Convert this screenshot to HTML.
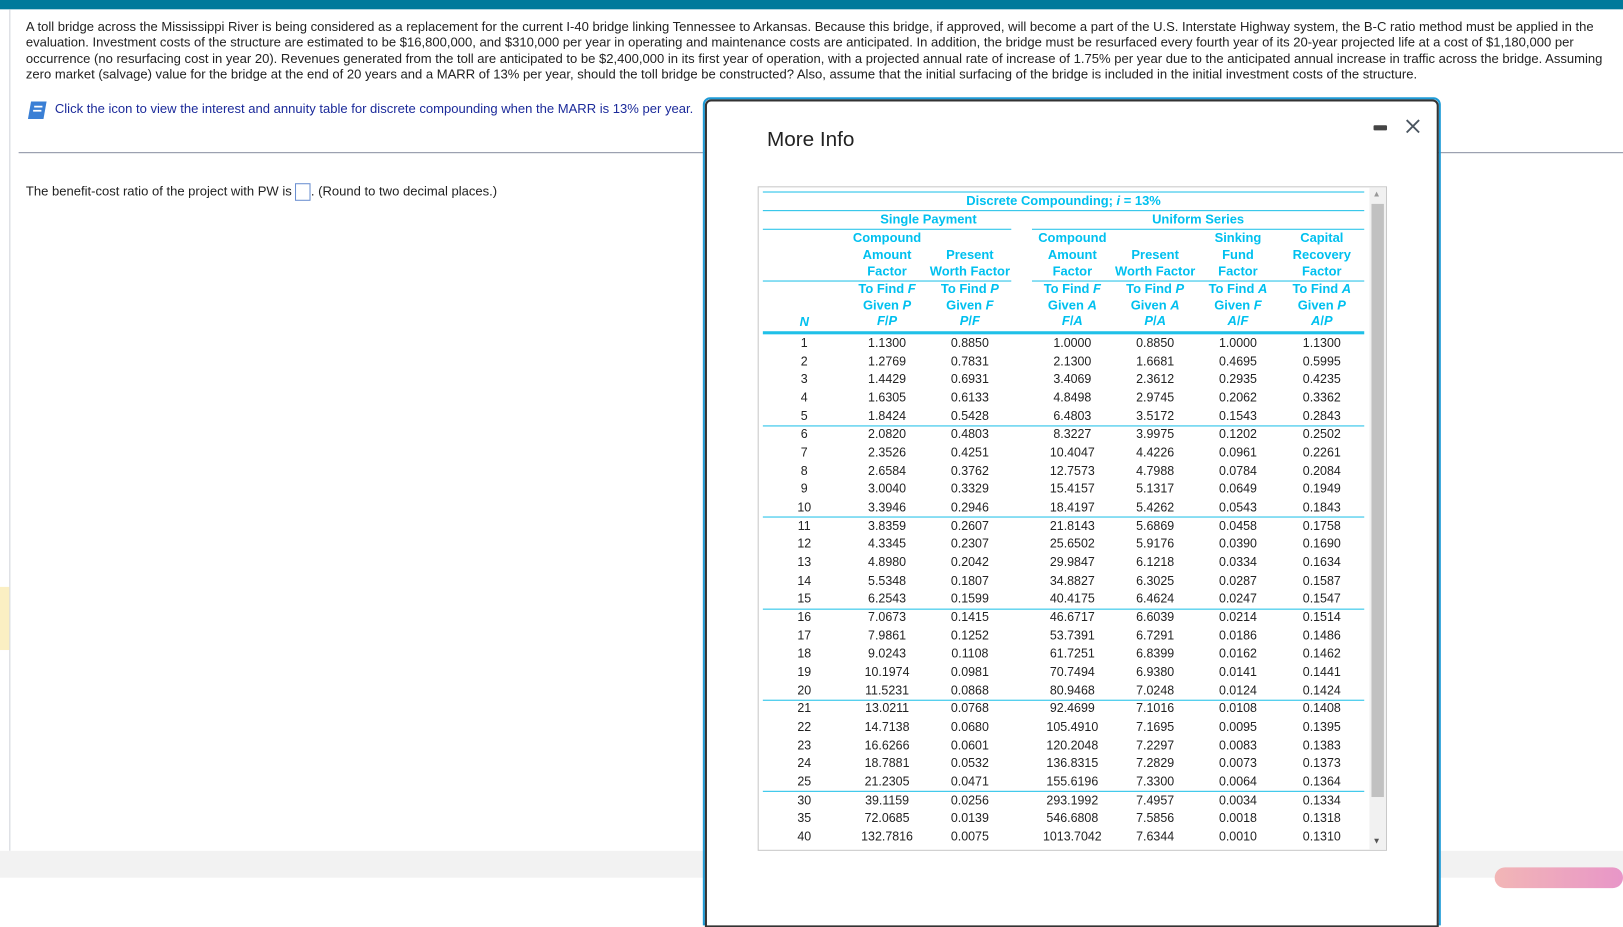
<!DOCTYPE html>
<html><head><meta charset="utf-8"><style>
html,body{margin:0;padding:0;width:1623px;height:878px;overflow:hidden;background:#fff}
#w{position:absolute;left:0;top:0;width:1568px;height:848px;transform:scale(1.03508);transform-origin:0 0;font-family:"Liberation Sans",Arial,sans-serif;color:#222}
.a{position:absolute}
.p{left:25px;top:19px;width:1532px;font-size:12.6px;line-height:15.3px;color:#222}
.t{position:absolute;font-size:12px;line-height:16px;text-align:center;width:90px}
.h{color:#00c0ef;font-weight:bold;font-size:12.5px}
.i{font-style:italic}
.l{position:absolute;height:1px;background:#1fc0e8}
</style></head><body><div id="w">
<div class="a" style="left:0;top:0;width:1568px;height:9px;background:#017a9b"></div>
<div class="a" style="left:9px;top:9px;width:1px;height:813px;background:#d0d3da"></div>
<div class="a" style="left:0;top:567px;width:9px;height:61px;background:#fbefc3"></div>
<div class="a" style="left:0;top:822px;width:1568px;height:26px;background:#f2f2f2"></div>
<div class="a p">A toll bridge across the Mississippi River is being considered as a replacement for the current I-40 bridge linking Tennessee to Arkansas. Because this bridge, if approved, will become a part of the U.S. Interstate Highway system, the B-C ratio method must be applied in the evaluation. Investment costs of the structure are estimated to be $16,800,000, and $310,000 per year in operating and maintenance costs are anticipated. In addition, the bridge must be resurfaced every fourth year of its 20-year projected life at a cost of $1,180,000 per occurrence (no resurfacing cost in year 20). Revenues generated from the toll are anticipated to be $2,400,000 in its first year of operation, with a projected annual rate of increase of 1.75% per year due to the anticipated annual increase in traffic across the bridge. Assuming zero market (salvage) value for the bridge at the end of 20 years and a MARR of 13% per year, should the toll bridge be constructed? Also, assume that the initial surfacing of the bridge is included in the initial investment costs of the structure.</div>
<svg class="a" style="left:26px;top:97px" width="21" height="19" viewBox="0 0 21 19"><path d="M4 1h15l-3 17H1z" fill="#3a7fd5"/><path d="M7 6h8M6 10h8" stroke="#fff" stroke-width="1.6"/></svg>
<div class="a" style="left:53px;top:97px;font-size:12.6px;line-height:16px;color:#1b2a9a">Click the icon to view the interest and annuity table for discrete compounding when the MARR is 13% per year.</div>
<div class="a" style="left:18px;top:147px;width:1550px;height:1px;background:#8a90a2"></div>
<div class="a" style="left:25px;top:177px;font-size:12.6px;line-height:16px">The benefit-cost ratio of the project with PW is <span style="display:inline-block;width:15px;height:17px;border:1px solid #6a8ed0;vertical-align:middle;box-sizing:border-box"></span>. (Round to two decimal places.)</div>
<div class="a" style="left:1444px;top:838px;width:124px;height:20px;border-radius:12px;background:linear-gradient(90deg,#f2b6b6,#e896c8)"></div>

<div class="a" style="left:679px;top:94px;width:713px;height:800px;border:2px solid #1e9bd7;border-radius:7px 7px 0 0;box-sizing:border-box"></div>
<div class="a" style="left:681px;top:96px;width:709px;height:800px;border:2px solid #333;border-radius:6px 6px 0 0;box-sizing:border-box;background:#fff"></div>
<div class="a" style="left:741px;top:124px;font-size:20px;color:#222">More Info</div>
<div class="a" style="left:1327px;top:121px;width:13px;height:5px;background:#444;border-radius:1px"></div>
<svg class="a" style="left:1357px;top:114px" width="16" height="16"><path d="M2 2L14 14M14 2L2 14" stroke="#4a5560" stroke-width="1.8"/></svg>

<div class="a" style="left:732px;top:180px;width:608px;height:642px;border:1px solid #c8c8c8;box-sizing:border-box"></div>
<div class="a" style="left:1323px;top:181px;width:16px;height:640px;background:#f1f1f1"></div>
<div class="a" style="left:1325px;top:197px;width:12px;height:573px;background:#c1c1c1"></div>
<div class="a" style="left:1326px;top:183px;font-size:8px;color:#999">▲</div>
<div class="a" style="left:1326px;top:808px;font-size:8px;color:#555">▼</div>

<div class="l" style="left:737px;top:185px;width:581px"></div>
<div class="l" style="left:737px;top:203px;width:581px"></div>
<div class="l" style="left:737px;top:221px;width:240px"></div>
<div class="l" style="left:997px;top:221px;width:321px"></div>
<div class="l" style="left:737px;top:271px;width:240px"></div>
<div class="l" style="left:997px;top:271px;width:321px"></div>
<div class="l" style="left:737px;top:320px;width:581px;height:3px"></div>
<div class="a h" style="left:737px;top:186px;width:581px;text-align:center;line-height:16px">Discrete Compounding; <span class="i">i</span> = 13%</div>
<div class="a h" style="left:737px;top:204px;width:320px;text-align:center;line-height:16px">Single Payment</div>
<div class="a h" style="left:997px;top:204px;width:321px;text-align:center;line-height:16px">Uniform Series</div>
<div class="t h" style="left:812px;top:222px;line-height:16px">Compound<br>Amount<br>Factor</div>
<div class="t h" style="left:892px;top:238px;line-height:16px">Present<br>Worth Factor</div>
<div class="t h" style="left:991px;top:222px;line-height:16px">Compound<br>Amount<br>Factor</div>
<div class="t h" style="left:1071px;top:238px;line-height:16px">Present<br>Worth Factor</div>
<div class="t h" style="left:1151px;top:222px;line-height:16px">Sinking<br>Fund<br>Factor</div>
<div class="t h" style="left:1232px;top:222px;line-height:16px">Capital<br>Recovery<br>Factor</div>
<div class="t h i" style="left:732px;top:303px">N</div>
<div class="t h" style="left:812px;top:272px;line-height:15.5px">To Find <i>F</i><br>Given <i>P</i><br><i>F</i>/<i>P</i></div>
<div class="t h" style="left:892px;top:272px;line-height:15.5px">To Find <i>P</i><br>Given <i>F</i><br><i>P</i>/<i>F</i></div>
<div class="t h" style="left:991px;top:272px;line-height:15.5px">To Find <i>F</i><br>Given <i>A</i><br><i>F</i>/<i>A</i></div>
<div class="t h" style="left:1071px;top:272px;line-height:15.5px">To Find <i>P</i><br>Given <i>A</i><br><i>P</i>/<i>A</i></div>
<div class="t h" style="left:1151px;top:272px;line-height:15.5px">To Find <i>A</i><br>Given <i>F</i><br><i>A</i>/<i>F</i></div>
<div class="t h" style="left:1232px;top:272px;line-height:15.5px">To Find <i>A</i><br>Given <i>P</i><br><i>A</i>/<i>P</i></div>
<div id="rows"></div>
</div>
<script>
var d=[["1","1.1300","0.8850","1.0000","0.8850","1.0000","1.1300"],["2","1.2769","0.7831","2.1300","1.6681","0.4695","0.5995"],["3","1.4429","0.6931","3.4069","2.3612","0.2935","0.4235"],["4","1.6305","0.6133","4.8498","2.9745","0.2062","0.3362"],["5","1.8424","0.5428","6.4803","3.5172","0.1543","0.2843"],["6","2.0820","0.4803","8.3227","3.9975","0.1202","0.2502"],["7","2.3526","0.4251","10.4047","4.4226","0.0961","0.2261"],["8","2.6584","0.3762","12.7573","4.7988","0.0784","0.2084"],["9","3.0040","0.3329","15.4157","5.1317","0.0649","0.1949"],["10","3.3946","0.2946","18.4197","5.4262","0.0543","0.1843"],["11","3.8359","0.2607","21.8143","5.6869","0.0458","0.1758"],["12","4.3345","0.2307","25.6502","5.9176","0.0390","0.1690"],["13","4.8980","0.2042","29.9847","6.1218","0.0334","0.1634"],["14","5.5348","0.1807","34.8827","6.3025","0.0287","0.1587"],["15","6.2543","0.1599","40.4175","6.4624","0.0247","0.1547"],["16","7.0673","0.1415","46.6717","6.6039","0.0214","0.1514"],["17","7.9861","0.1252","53.7391","6.7291","0.0186","0.1486"],["18","9.0243","0.1108","61.7251","6.8399","0.0162","0.1462"],["19","10.1974","0.0981","70.7494","6.9380","0.0141","0.1441"],["20","11.5231","0.0868","80.9468","7.0248","0.0124","0.1424"],["21","13.0211","0.0768","92.4699","7.1016","0.0108","0.1408"],["22","14.7138","0.0680","105.4910","7.1695","0.0095","0.1395"],["23","16.6266","0.0601","120.2048","7.2297","0.0083","0.1383"],["24","18.7881","0.0532","136.8315","7.2829","0.0073","0.1373"],["25","21.2305","0.0471","155.6196","7.3300","0.0064","0.1364"],["30","39.1159","0.0256","293.1992","7.4957","0.0034","0.1334"],["35","72.0685","0.0139","546.6808","7.5856","0.0018","0.1318"],["40","132.7816","0.0075","1013.7042","7.6344","0.0010","0.1310"]];
var cx=[777,857,937,1036,1116,1196,1277],h="";
for(var i=0;i<d.length;i++){var y=331+i*17.67-8;
for(var j=0;j<7;j++)h+='<div class="t" style="left:'+(cx[j]-45)+'px;top:'+y.toFixed(1)+'px">'+d[i][j]+'</div>';
if(i%5==4&&i<27)h+='<div class="l" style="left:737px;top:'+(y+17.3).toFixed(1)+'px;width:581px"></div>';}
document.getElementById("rows").innerHTML=h;
</script>
</body></html>
